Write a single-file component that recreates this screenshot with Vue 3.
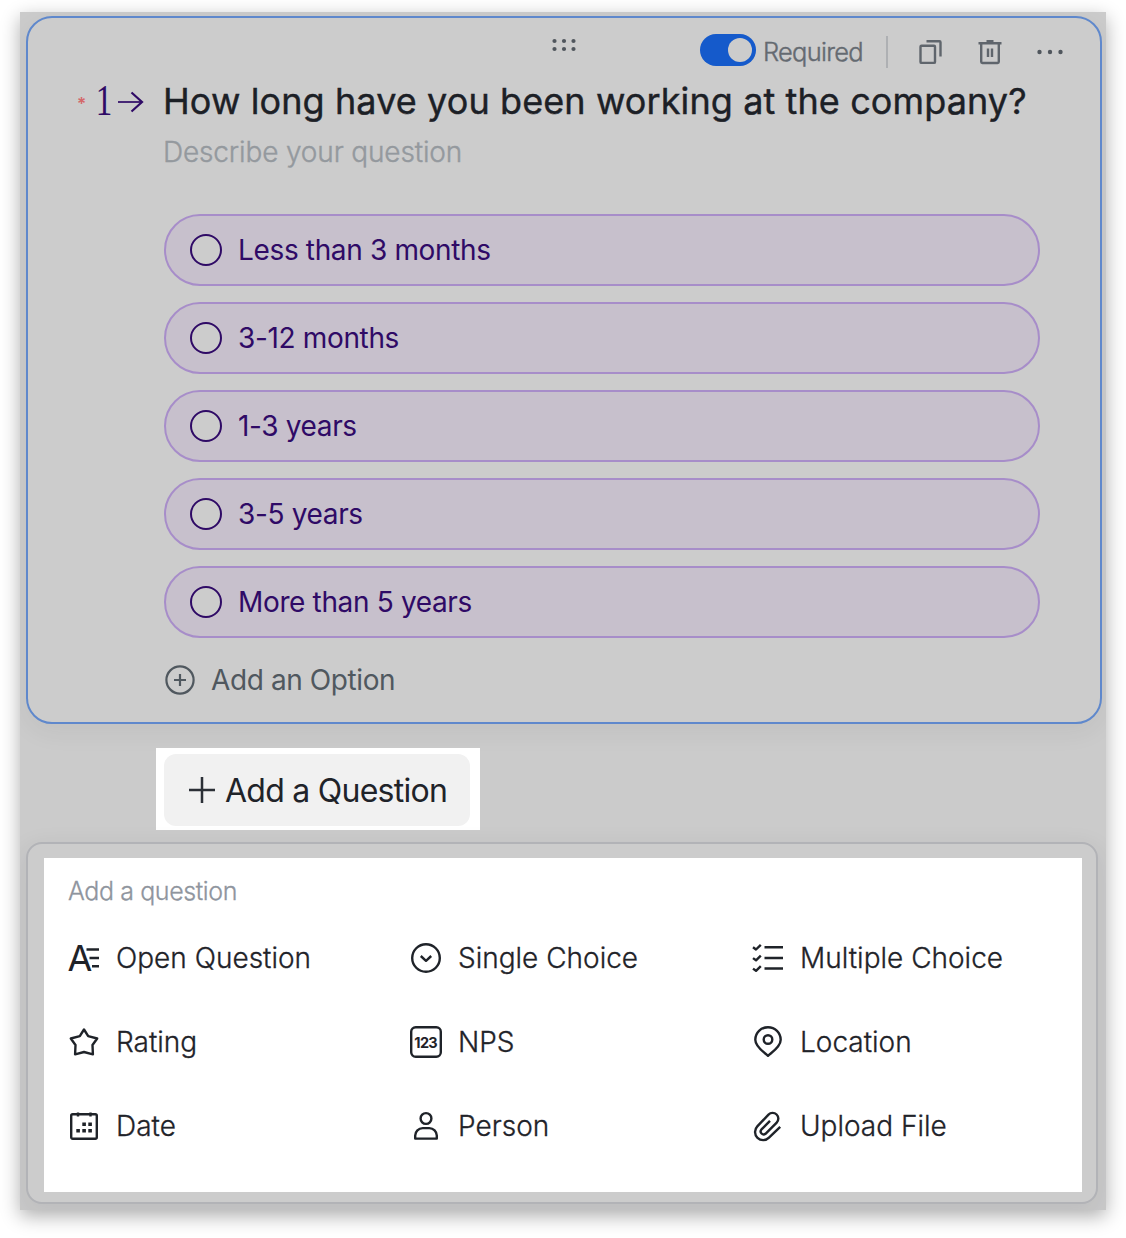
<script setup>
import { ref } from 'vue'

const required = ref(true)
const selected = ref(null)

const options = ['Less than 3 months', '3-12 months', '1-3 years', '3-5 years', 'More than 5 years']

const questionTypes = [
  { id: 'open', label: 'Open Question' },
  { id: 'single', label: 'Single Choice' },
  { id: 'multiple', label: 'Multiple Choice' },
  { id: 'rating', label: 'Rating' },
  { id: 'nps', label: 'NPS' },
  { id: 'location', label: 'Location' },
  { id: 'date', label: 'Date' },
  { id: 'person', label: 'Person' },
  { id: 'upload', label: 'Upload File' }
]
</script>

<template>
  <main class="frame">
    <section class="question-card">
      <div class="toolbar">
        <svg class="handle" width="28" height="32" viewBox="0 0 28 32">
          <g fill="#50565d">
            <circle cx="4.5" cy="7" r="2.1" />
            <circle cx="14" cy="7" r="2.1" />
            <circle cx="23.5" cy="7" r="2.1" />
            <circle cx="4.5" cy="15" r="2.1" />
            <circle cx="14" cy="15" r="2.1" />
            <circle cx="23.5" cy="15" r="2.1" />
          </g>
        </svg>
        <div class="tools">
          <span class="toggle" :class="{ on: required }" @click="required = !required"></span>
          <span class="required-label">Required</span>
          <span class="divider"></span>
          <svg class="tool" width="32" height="32" viewBox="0 0 32 32">
            <rect x="6.5" y="11.7" width="14.5" height="17.2" rx="1" />
            <path d="M12.500 7.300h13a1 1 0 0 1 1 1V22.500" />
          </svg>
          <svg class="tool" width="32" height="32" viewBox="0 0 32 32">
            <path d="M4.500 9.300h23M12.500 7.300h7M7.200 9.500v18.300a1.200 1.200 0 0 0 1.200 1.200h15.200a1.200 1.200 0 0 0 1.200-1.200V9.500" />
            <path d="M14 14.500v8.500M18 14.500v8.500" />
          </svg>
          <svg class="tool dots" width="32" height="32" viewBox="0 0 32 32">
            <circle cx="5.500" cy="18" r="2.200" />
            <circle cx="16" cy="18" r="2.200" />
            <circle cx="26.500" cy="18" r="2.200" />
          </svg>
        </div>
      </div>

      <div class="question">
        <div class="gutter">
          <span class="asterisk">*</span>
          <span class="number">1</span>
          <svg width="30" height="30" viewBox="0 0 30 30" fill="none" stroke="#2f0a66">
            <path d="M2 16h24" stroke-width="1.700" />
            <path d="M15.500 6.500l10.500 9.500-10.500 9.500" stroke-width="2.200" />
          </svg>
        </div>
        <div class="content">
          <h1 class="title">How long have you been working at the company?</h1>
          <p class="description">Describe your question</p>
          <ul class="options">
            <li v-for="option in options" :key="option" class="option" @click="selected = option">
              <span class="radio" :class="{ checked: selected === option }"></span>
              <span>{{ option }}</span>
            </li>
          </ul>
          <div class="add-option">
            <svg width="32" height="32" viewBox="0 0 32 32" fill="none" stroke="#50585f" stroke-width="2.200">
              <circle cx="16" cy="16" r="13.600" />
              <path d="M16 10v12M10 16h12" />
            </svg>
            <span>Add an Option</span>
          </div>
        </div>
      </div>
    </section>

    <div class="highlight">
      <button class="add-question" type="button">
        <svg width="28" height="28" viewBox="0 0 28 28" fill="none" stroke="#2b2f36" stroke-width="2.500">
          <path d="M14 1v26M1 14h26" />
        </svg>
        <span>Add a Question</span>
      </button>
    </div>

    <section class="type-card">
      <div class="panel">
        <p class="panel-title">Add a question</p>
        <div class="types">
          <div v-for="type in questionTypes" :key="type.id" class="type">
            <svg class="type-icon" width="32" height="32" viewBox="0 0 32 32">
              <template v-if="type.id === 'open'">
                <text class="letter" x="-0.500" y="29">A</text>
                <path d="M18.500 7.500H31M21.500 16H31M24 24.300h7" />
              </template>
              <template v-else-if="type.id === 'single'">
                <circle cx="16" cy="16" r="13.800" />
                <path d="M10.800 14l5.200 4.800 5.200-4.800" />
              </template>
              <template v-else-if="type.id === 'multiple'">
                <path d="M12.500 5.200H31M12.500 16H31M12.500 26.500H31" />
                <path d="M1 5.300l3 2.200 4.800-4.700M1 16.100l3 2.200 4.800-4.700M1 26.600l3 2.200 4.800-4.700" />
              </template>
              <path
                v-else-if="type.id === 'rating'"
                d="M16 3.500l4.200 6.700 9 2.300-4.700 6.500.4 9.300-8.900-2.300-8.900 2.300.4-9.300-4.700-6.500 9-2.300z"
              />
              <template v-else-if="type.id === 'nps'">
                <rect x="1.200" y="1.200" width="29.600" height="29.600" rx="4.500" />
                <text class="digits" x="4.300" y="21.500" textLength="23.400">123</text>
              </template>
              <template v-else-if="type.id === 'location'">
                <path d="M16 29.800C12.500 26.500 3.300 21 3.300 13.700a12.700 12.500 0 0 1 25.400 0C28.700 21 19.500 26.500 16 29.800z" />
                <circle cx="16" cy="13.500" r="4.300" />
              </template>
              <template v-else-if="type.id === 'date'">
                <rect x="3.200" y="4.300" width="25.600" height="24.500" rx="1.500" />
                <path d="M10 2.500v4M22.500 2.500v4" />
                <path
                  class="solid"
                  d="M14.300 12.500h3.600v3.600h-3.600zM20.300 12.500h3.600v3.600h-3.600zM8.300 19h3.600v3.600H8.300zM14.300 19h3.600v3.600h-3.600zM20.300 19h3.600v3.600h-3.600z"
                />
              </template>
              <template v-else-if="type.id === 'person'">
                <circle cx="16" cy="8.500" r="5.400" />
                <path d="M5.200 28.600v-3a7.500 7.500 0 0 1 7.500-7.500h6.600a7.500 7.500 0 0 1 7.500 7.500v3z" />
              </template>
              <path
                v-else
                d="M28.200 16.800L17 27.600a8 8 0 0 1-11.700-11.300L16.500 4.600a5.600 5.600 0 0 1 8.200 8L13.500 23.800a3 3 0 0 1-4.200-4.200l8.700-8.700"
              />
            </svg>
            <span>{{ type.label }}</span>
          </div>
        </div>
      </div>
    </section>
  </main>
</template>

<style>
body {
  background: #fff;
}
</style>

<style scoped>
.frame {
  box-sizing: border-box;
  display: flow-root;
  width: 1086px;
  height: 1198px;
  margin: 12px 20px 28px;
  overflow: hidden;
  background: #cbcbcb;
  box-shadow: 0 6px 18px rgba(0, 0, 0, 0.32);
  font-family: Inter, 'Liberation Sans', sans-serif;
  font-size: 28px;
}

.question-card {
  box-sizing: border-box;
  height: 708px;
  margin: 4px 4px 0 6px;
  border: 2px solid #5f88cc;
  border-radius: 26px;
  background: #ccc;
  box-shadow: 0 8px 26px rgba(31, 35, 41, 0.06);
}

.toolbar {
  display: grid;
  grid-template-columns: 1fr 28px 1fr;
  align-items: center;
  height: 64px;
}

.handle {
  grid-column: 2;
}

.tools {
  display: flex;
  align-items: center;
  justify-content: flex-end;
  gap: 28px;
  padding-right: 34px;
}

.toggle {
  box-sizing: border-box;
  display: flex;
  width: 56px;
  height: 32px;
  margin-right: -21px;
  padding: 4px;
  border-radius: 16px;
  background: #8f959e;
}

.toggle::after {
  content: '';
  width: 24px;
  height: 24px;
  border-radius: 50%;
  background: #ccc;
}

.toggle.on {
  justify-content: flex-end;
  background: #155acb;
}

.required-label {
  width: 123px;
  margin-right: -28px;
  padding-top: 2px;
  color: #646a71;
  font-size: 25.5px;
  font-weight: 300;
  letter-spacing: -0.75px;
  -webkit-text-stroke: 0.4px currentColor;
}

.divider {
  width: 2px;
  height: 32px;
  margin-top: 4px;
  margin-right: -2px;
  background: #aeb0b3;
}

.tool {
  fill: none;
  stroke: #5f656c;
  stroke-width: 2.4;
}

.tool.dots {
  fill: #50565d;
  stroke: none;
}

.question {
  display: grid;
  grid-template-columns: 136px 876px;
}

.gutter {
  display: flex;
  align-items: center;
  height: 38px;
  padding-left: 49px;
}

.asterisk {
  width: 16px;
  padding-top: 7px;
  color: #d4686a;
  font-size: 17px;
  font-weight: 600;
  line-height: 19px;
}

.number {
  width: 22px;
  margin-right: 1px;
  color: #2f0a66;
  font-family: 'Liberation Serif', serif;
  font-size: 44px;
  line-height: 38px;
  transform: scaleX(0.75);
}

.title {
  margin: 0 0 0 -1px;
  color: #1c2026;
  font-size: 36px;
  font-weight: 400;
  letter-spacing: 0.1px;
  line-height: 38px;
  white-space: nowrap;
  -webkit-text-stroke: 0.4px currentColor;
}

.description {
  margin: 14px 0 44px -1px;
  color: #94999e;
  font-weight: 300;
  letter-spacing: -0.15px;
  line-height: 36px;
  -webkit-text-stroke: 0.4px currentColor;
}

.options {
  display: flex;
  flex-direction: column;
  gap: 16px;
  margin: 0;
  padding: 0;
  list-style: none;
}

.option {
  box-sizing: border-box;
  display: flex;
  align-items: center;
  gap: 16px;
  height: 72px;
  padding-left: 24px;
  border: 2px solid #a78dc9;
  border-radius: 36px;
  background: #c7c0cc;
  color: #2f0a66;
  letter-spacing: -0.35px;
}

.radio {
  box-sizing: border-box;
  width: 32px;
  height: 32px;
  border: 2px solid #2f0a66;
  border-radius: 50%;
  background: #ccc;
}

.radio.checked {
  border-width: 9px;
}

.add-option {
  display: flex;
  align-items: center;
  gap: 15px;
  height: 36px;
  margin-top: 24px;
  color: #50585f;
  letter-spacing: -0.4px;
}

.highlight {
  box-sizing: border-box;
  width: 324px;
  height: 82px;
  margin: 24px 0 12px 136px;
  padding: 6px 10px 4px 8px;
  background: #fff;
}

.add-question {
  display: flex;
  align-items: center;
  gap: 9px;
  width: 306px;
  height: 72px;
  padding: 0 0 0 24px;
  border: 0;
  border-radius: 12px;
  background: #f1f1f1;
  color: #1f2329;
  font-family: inherit;
  font-size: 32px;
  letter-spacing: -0.74px;
  white-space: nowrap;
}

.type-card {
  box-sizing: border-box;
  height: 362px;
  margin: 0 8px 0 6px;
  padding: 14px 14px 10px 16px;
  border: 2px solid #b2b3b7;
  border-radius: 16px;
  background: #ccc;
  box-shadow: 0 8px 24px 4px rgba(31, 35, 41, 0.07);
}

.panel {
  box-sizing: border-box;
  height: 334px;
  padding: 16px 0 0 24px;
  background: #fff;
}

.panel-title {
  margin: 0 0 8px;
  color: #8f959e;
  font-size: 25px;
  font-weight: 300;
  letter-spacing: -0.4px;
  line-height: 34px;
  -webkit-text-stroke: 0.3px currentColor;
}

.types {
  display: grid;
  grid-template-columns: 342px 342px 1fr;
  grid-auto-rows: 84px;
}

.type {
  display: flex;
  align-items: center;
  gap: 16px;
  color: #1f2329;
  font-weight: 300;
  -webkit-text-stroke: 0.3px currentColor;
}

.type-icon {
  overflow: visible;
  fill: none;
  stroke: #1f2329;
  stroke-width: 2.4;
  stroke-linejoin: round;
}

.type-icon text,
.type-icon .solid {
  fill: #1f2329;
  stroke: none;
}

.letter {
  font-size: 36px;
  font-weight: 400;
  letter-spacing: 0;
}

.digits {
  font-size: 14.5px;
  font-weight: 700;
}
</style>
